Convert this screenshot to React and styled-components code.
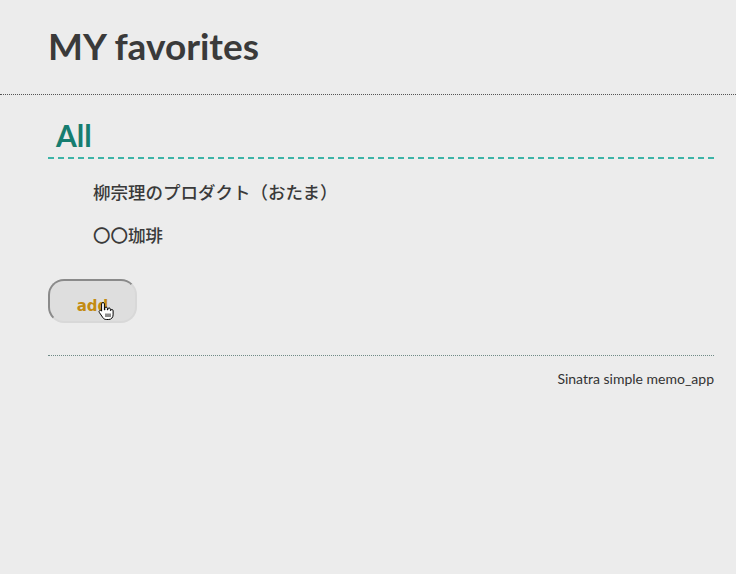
import React from "react";
import styled, { createGlobalStyle } from "styled-components";

const GlobalStyle = createGlobalStyle`
  html, body {
    margin: 0;
    padding: 0;
    background: #ececec;
    font-family: Lato, "Noto Sans CJK JP", sans-serif;
    color: #3a3a3a;
  }
`;

const Page = styled.div`
  min-height: 574px;
  background: #ececec;
`;

const Header = styled.header`
  height: 95px;
  padding-left: 48px;
  border-bottom: 1px dotted #555;
  box-sizing: border-box;
`;

const Title = styled.h1`
  margin: 0;
  padding-top: 23px;
  font-size: 37px;
  font-weight: 700;
  line-height: 46px;
  color: #3a3a3a;
`;

const Main = styled.main`
  margin: 0 22px 0 48px;
`;

const Category = styled.h2`
  margin: 0;
  padding: 20px 0 2px 8px;
  font-size: 30px;
  font-weight: 700;
  line-height: 40px;
  color: #167d70;
  border-bottom: 2px dashed #3cb4a7;
`;

const List = styled.ul`
  list-style: none;
  margin: 0;
  padding: 21px 0 0 45px;
`;

const Item = styled.li`
  font-family: "Noto Sans CJK JP", sans-serif;
  font-size: 17.5px;
  font-weight: 500;
  line-height: 24px;
  margin-bottom: 19px;
  color: #3a3a3a;
`;

const AddButton = styled.button`
  position: relative;
  margin-top: 13px;
  width: 89px;
  height: 44px;
  border-radius: 16px;
  background: #dedede;
  border: 2px solid #d8d8d8;
  border-top-color: #8a8a8a;
  border-left-color: #8a8a8a;
  font-family: "DejaVu Sans", sans-serif;
  font-size: 15px;
  font-weight: 700;
  color: #c38b12;
  padding: 10px 0 0;
  cursor: pointer;
`;

const Cursor = styled.svg`
  position: absolute;
  left: 48px;
  top: 20px;
`;

const Footer = styled.footer`
  margin: 32px 22px 0 48px;
  border-top: 1px dotted #6f8a86;
  padding-top: 14px;
  text-align: right;
  font-size: 14px;
  color: #333;
`;

const HandCursor = () => (
  <Cursor width="16" height="20" viewBox="0 0 16 20">
    <path
      d="M5 1.5c.8 0 1.4.6 1.4 1.4V9h.4V7.4c0-.8.6-1.3 1.3-1.3s1.3.5 1.3 1.3V9h.4V8.2c0-.8.6-1.3 1.3-1.3s1.3.5 1.3 1.3V9.6h.3c0-.7.6-1.1 1.2-1.1.7 0 1.2.5 1.2 1.2v4.2c0 2.6-1.9 4.6-4.4 4.6H8.3c-1.5 0-2.6-.7-3.4-1.8L1.3 11.4c-.4-.6-.3-1.4.3-1.8.6-.4 1.3-.3 1.8.2l.2.3V2.9c0-.8.6-1.4 1.4-1.4z"
      fill="#fff"
      stroke="#000"
      strokeWidth="1"
    />
    <path d="M8 12.5v3.5M10 12.5v3.5M12 12.5v3.5" stroke="#000" strokeWidth="0.9" />
  </Cursor>
);

const App = () => {
  return (
    <Page>
      <GlobalStyle />
      <Header>
        <Title>MY favorites</Title>
      </Header>
      <Main>
        <Category>All</Category>
        <List>
          <Item>柳宗理のプロダクト（おたま）</Item>
          <Item>〇〇珈琲</Item>
        </List>
        <AddButton>
          add
          <HandCursor />
        </AddButton>
      </Main>
      <Footer>Sinatra simple memo_app</Footer>
    </Page>
  );
};

export default App;
